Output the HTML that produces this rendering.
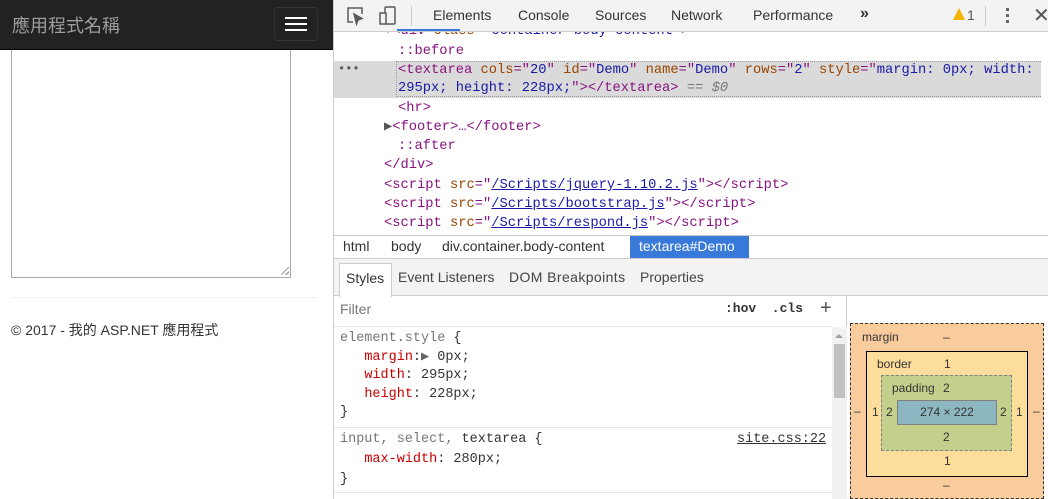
<!DOCTYPE html>
<html><head><meta charset="utf-8"><style>
*{margin:0;padding:0;box-sizing:border-box}
body{width:1048px;height:499px;overflow:hidden;position:relative;background:#fff;font-family:"Liberation Sans","Noto Sans CJK TC",sans-serif;font-size:14px;color:#333}
.a{position:absolute}
.m{font-family:"Liberation Mono","DejaVu Sans Mono",monospace;font-size:13.75px;white-space:pre}
.tg{color:#881280}.at{color:#994500}.av{color:#1a1aa6}.ps{color:#881280}
.ln{position:absolute;left:0;height:19px;line-height:19px}
.ui{font-family:"Liberation Sans","DejaVu Sans",sans-serif;font-size:14px;color:#333}
.pn{color:#c80000}
.st{font-size:13.5px}
</style></head><body>
<div class="a" style="left:0;top:0;width:333px;height:50px;background:#222;border-bottom:1px solid #080808"></div>
<div class="a" style="left:12px;top:12px;font-size:18px;color:#9d9d9d">應用程式名稱</div>
<div class="a" style="left:274px;top:7px;width:44px;height:34px;border:1px solid #333;border-radius:4px"></div>
<div class="a" style="left:285px;top:17px;width:22px;height:2px;background:#fff"></div>
<div class="a" style="left:285px;top:23px;width:22px;height:2px;background:#fff"></div>
<div class="a" style="left:285px;top:29px;width:22px;height:2px;background:#fff"></div>
<div class="a" style="left:11px;top:50px;width:280px;height:228px;border:1px solid #a9a9a9;border-top:none"></div>
<div class="a" style="left:281px;top:267px;width:8px;height:8px;background:linear-gradient(135deg,transparent 45%,#999 45%,#999 55%,transparent 55%,transparent 75%,#999 75%,#999 85%,transparent 85%)"></div>
<div class="a" style="left:11px;top:297px;width:307px;height:1px;background:#eee"></div>
<div class="a" style="left:11px;top:320px;font-size:14px;color:#333">© 2017 - 我的 ASP.NET 應用程式</div>
<div class="a" style="left:333px;top:0;width:1px;height:499px;background:#ccc"></div>
<div class="a" style="left:334px;top:61px;width:707px;height:37px;background:#dadada"></div>
<div class="a" style="left:396px;top:61px;width:645px;height:36px;border:1px dotted #999;border-right:none;border-left:1px dotted #999"></div>
<div class="a m" style="left:338px;top:62px;color:#555;font-size:12px">•••</div>
<div class="a m" style="left:0;top:0;width:1048px">
<div class="ln tg" style="left:384px;top:22px">▾&lt;div <span class="at">class</span>="<span class="av">container body-content</span>"&gt;</div>
<div class="ln ps" style="left:398px;top:42px">::before</div>
<div class="ln" style="left:398px;top:61px"><span class="tg">&lt;textarea </span><span class="at">cols</span><span class="tg">="</span><span class="av">20</span><span class="tg">" </span><span class="at">id</span><span class="tg">="</span><span class="av">Demo</span><span class="tg">" </span><span class="at">name</span><span class="tg">="</span><span class="av">Demo</span><span class="tg">" </span><span class="at">rows</span><span class="tg">="</span><span class="av">2</span><span class="tg">" </span><span class="at">style</span><span class="tg">="</span><span class="av">margin: 0px; width:</span></div>
<div class="ln" style="left:398px;top:79px"><span class="av">295px; height: 228px;</span><span class="tg">"&gt;&lt;/textarea&gt;</span><span style="color:#777"> == <i>$0</i></span></div>
<div class="ln tg" style="left:398px;top:99px">&lt;hr&gt;</div>
<div class="ln tg" style="left:384px;top:118px"><span style="color:#555">▶</span>&lt;footer&gt;…&lt;/footer&gt;</div>
<div class="ln ps" style="left:398px;top:137px">::after</div>
<div class="ln tg" style="left:384px;top:156px">&lt;/div&gt;</div>
<div class="ln tg" style="left:384px;top:176px">&lt;script <span class="at">src</span>="<u class="av">/Scripts/jquery-1.10.2.js</u>"&gt;&lt;/script&gt;</div>
<div class="ln tg" style="left:384px;top:195px">&lt;script <span class="at">src</span>="<u class="av">/Scripts/bootstrap.js</u>"&gt;&lt;/script&gt;</div>
<div class="ln tg" style="left:384px;top:214px">&lt;script <span class="at">src</span>="<u class="av">/Scripts/respond.js</u>"&gt;&lt;/script&gt;</div>
</div>
<div class="a" style="left:334px;top:0;width:714px;height:32px;background:#f3f3f3;border-bottom:1px solid #ccc"></div>
<svg class="a" style="left:344px;top:5px" width="22" height="22" viewBox="0 0 22 22" fill="none" stroke="#5a5a5a" stroke-width="1.5"><path d="M9 17H4V3h14v6"/><path d="M10 9l2.5 10 1.5-4 4-1.5z" fill="#5a5a5a"/></svg>
<svg class="a" style="left:377px;top:5px" width="22" height="22" viewBox="0 0 22 22" fill="none" stroke="#5a5a5a" stroke-width="1.5"><rect x="8" y="2" width="10" height="17" rx="1"/><rect x="3" y="8" width="6" height="11" fill="#f3f3f3"/></svg>
<div class="a" style="left:411px;top:6px;width:1px;height:20px;background:#ccc"></div>
<div class="a ui" style="left:433px;top:7px">Elements</div>
<div class="a" style="left:397px;top:29px;width:63px;height:2px;background:#3879d9"></div>
<div class="a ui" style="left:518px;top:7px">Console</div>
<div class="a ui" style="left:595px;top:7px">Sources</div>
<div class="a ui" style="left:671px;top:7px">Network</div>
<div class="a ui" style="left:753px;top:7px">Performance</div>
<div class="a ui" style="left:860px;top:5px;font-weight:bold;font-size:16px">»</div>
<div class="a" style="left:953px;top:8px;width:0;height:0;border-left:6px solid transparent;border-right:6px solid transparent;border-bottom:12px solid #f4b400"></div>
<div class="a ui" style="left:967px;top:7px;color:#555">1</div>
<div class="a" style="left:985px;top:6px;width:1px;height:20px;background:#ccc"></div>
<div class="a" style="left:1006px;top:8px;width:3px;height:3px;background:#666;box-shadow:0 6px 0 #666,0 12px 0 #666"></div>
<div class="a ui" style="left:1033px;top:3px;font-size:20px;color:#555">✕</div>
<div class="a" style="left:334px;top:235px;width:714px;height:24px;background:#fff;border-top:1px solid #ccc;border-bottom:1px solid #ccc"></div>
<div class="a ui" style="left:343px;top:238px">html</div>
<div class="a ui" style="left:391px;top:238px">body</div>
<div class="a ui" style="left:442px;top:238px">div.container.body-content</div>
<div class="a ui" style="left:630px;top:236px;width:119px;height:22px;background:#3879d9;color:#fff;padding:2px 0 0 9px">textarea#Demo</div>
<div class="a" style="left:334px;top:259px;width:714px;height:37px;background:#f3f3f3;border-bottom:1px solid #ccc"></div>
<div class="a ui" style="left:339px;top:263px;width:53px;height:34px;background:#fff;border:1px solid #ccc;border-bottom:none;padding:6px 0 0 6px">Styles</div>
<div class="a ui" style="left:398px;top:269px;color:#444">Event Listeners</div>
<div class="a ui" style="left:509px;top:269px;color:#444;letter-spacing:0.4px">DOM Breakpoints</div>
<div class="a ui" style="left:640px;top:269px;color:#444">Properties</div>
<div class="a ui" style="left:340px;top:301px;color:#777">Filter</div>
<div class="a m" style="left:725px;top:301px;font-weight:bold;color:#333;font-size:13px">:hov  .cls</div>
<div class="a ui" style="left:820px;top:297px;font-size:20px;color:#555">+</div>
<div class="a" style="left:334px;top:326px;width:498px;height:1px;background:#e4e4e4"></div>
<div class="a" style="left:846px;top:296px;width:1px;height:203px;background:#ccc"></div>
<div class="a m st" style="left:340px;top:330px;line-height:18.5px;color:#333"><span style="color:#777">element.style</span> {
   <span class="pn">margin</span>:<span style="color:#666">▶</span> 0px;
   <span class="pn">width</span>: 295px;
   <span class="pn">height</span>: 228px;
}</div>
<div class="a" style="left:334px;top:427px;width:498px;height:1px;background:#e4e4e4"></div>
<div class="a m st" style="left:340px;top:430px;line-height:20px;color:#333"><span style="color:#777">input, select,</span> textarea {
   <span class="pn">max-width</span>: 280px;
}</div>
<div class="a m st" style="left:737px;top:430px;line-height:20px;color:#333;text-decoration:underline">site.css:22</div>
<div class="a" style="left:334px;top:492px;width:498px;height:1px;background:#e4e4e4"></div>
<div class="a" style="left:832px;top:327px;width:15px;height:172px;background:#f1f1f1"></div>
<div class="a" style="left:834px;top:344px;width:11px;height:54px;background:#c1c1c1"></div>
<div class="a" style="left:835px;top:334px;width:0;height:0;border-left:4px solid transparent;border-right:4px solid transparent;border-bottom:4px solid #a0a0a0"></div>
<div class="a ui" style="left:850px;top:323px;width:194px;height:176px;background:#f9cc9d;border:1px dashed #333;font-size:12px">
 <div class="a" style="left:11px;top:6px">margin</div>
 <div class="a" style="left:92px;top:6px">–</div>
 <div class="a" style="left:3px;top:80px">–</div>
 <div class="a" style="left:182px;top:80px">–</div>
 <div class="a" style="left:92px;top:154px">–</div>
 <div class="a" style="left:15px;top:27px;width:162px;height:126px;background:#fddd9b;border:1px solid #000">
  <div class="a" style="left:10px;top:5px">border</div>
  <div class="a" style="left:77px;top:5px">1</div>
  <div class="a" style="left:5px;top:53px">1</div>
  <div class="a" style="left:149px;top:53px">1</div>
  <div class="a" style="left:77px;top:102px">1</div>
  <div class="a" style="left:14px;top:23px;width:131px;height:76px;background:#c3d08b;border:1px dashed #808080">
   <div class="a" style="left:10px;top:5px">padding</div>
   <div class="a" style="left:61px;top:5px">2</div>
   <div class="a" style="left:4px;top:29px">2</div>
   <div class="a" style="left:118px;top:29px">2</div>
   <div class="a" style="left:61px;top:54px">2</div>
   <div class="a" style="left:15px;top:24px;width:100px;height:25px;background:#8cb6c0;border:1px solid #808080;text-align:center;line-height:23px">274 × 222</div>
  </div>
 </div>
</div>
</body></html>
